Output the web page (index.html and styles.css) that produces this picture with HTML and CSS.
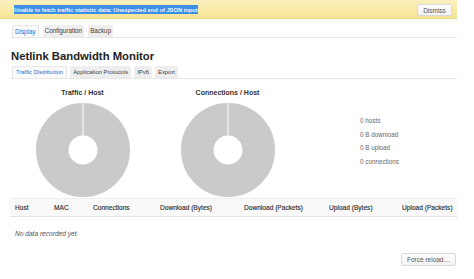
FILE: index.html
```html
<!DOCTYPE html>
<html>
<head>
<meta charset="utf-8">
<link rel="stylesheet" href="styles.css">
</head>
<body>
<div class="page">
  <div class="alert">
    <span class="alert-text"><span class="sel">Unable to fetch traffic statistic data: Unexpected end of JSON input</span></span>
    <button class="btn dismiss">Dismiss</button>
  </div>
  <ul class="tabs top">
    <li class="active">Display</li>
    <li>Configuration</li>
    <li>Backup</li>
  </ul>
  <h2 class="title">Netlink Bandwidth Monitor</h2>
  <ul class="tabs sub">
    <li class="active">Traffic Distribution</li>
    <li>Application Protocols</li>
    <li>IPv6</li>
    <li>Export</li>
  </ul>
  <div class="charts">
    <div class="chart">
      <div class="chart-title">Traffic / Host</div>
      <svg class="donut" width="96" height="96" viewBox="0 0 96 96">
        <circle cx="48" cy="48" r="30.75" fill="none" stroke="#cacaca" stroke-width="32.5"/>
        <line x1="48" y1="0" x2="48" y2="34" stroke="#ffffff" stroke-width="1"/>
      </svg>
    </div>
    <div class="chart">
      <div class="chart-title">Connections / Host</div>
      <svg class="donut" width="96" height="96" viewBox="0 0 96 96">
        <circle cx="48" cy="48" r="30.75" fill="none" stroke="#cacaca" stroke-width="32.5"/>
        <line x1="48" y1="0" x2="48" y2="34" stroke="#ffffff" stroke-width="1"/>
      </svg>
    </div>
    <div class="stats">
      <div>0 hosts</div>
      <div>0 B download</div>
      <div>0 B upload</div>
      <div>0 connections</div>
    </div>
  </div>
  <table class="hosts">
    <thead>
      <tr>
        <th class="c1">Host</th>
        <th class="c2">MAC</th>
        <th class="c3">Connections</th>
        <th class="c4">Download (Bytes)</th>
        <th class="c5">Download (Packets)</th>
        <th class="c6">Upload (Bytes)</th>
        <th class="c7">Upload (Packets)</th>
      </tr>
    </thead>
    <tbody>
      <tr><td colspan="7" class="empty">No data recorded yet.</td></tr>
    </tbody>
  </table>
  <div class="actions">
    <button class="btn reload">Force reload…</button>
  </div>
</div>
</body>
</html>
```
FILE: styles.css
```css
html, body {
  margin: 0;
  padding: 0;
  background: #ffffff;
}
body {
  font-family: "Liberation Sans", Arial, sans-serif;
  color: #404040;
  font-size: 7px;
}
.page {
  width: 447px;
  padding-left: 10px;
}
.alert {
  height: 19px;
  box-sizing: border-box;
  margin-left: -10px;
  padding: 0 5px 0 14px;
  display: flex;
  align-items: center;
  justify-content: space-between;
  background: linear-gradient(#fbf0be, #f6e594);
  border-bottom: 1px solid #e8d98c;
}
.alert-text {
  font-size: 5.75px;
  font-weight: bold;
}
.sel {
  background: #3d8ee6;
  color: #f3f7ff;
  padding: 1.5px 0;
}
.btn {
  font-family: "Liberation Sans", Arial, sans-serif;
  font-size: 6.5px;
  color: #555;
  background: linear-gradient(#ffffff, #f2f2f2);
  border: 1px solid #d8d8d8;
  border-radius: 2px;
  padding: 0;
  height: 13px;
}
.dismiss {
  width: 35px;
  height: 12px;
  margin-top: 2px;
}
.tabs {
  list-style: none;
  margin: 0;
  padding: 0 0 0 2px;
  display: flex;
  gap: 4px;
  border-bottom: 1px solid #e6e6e6;
  height: 12px;
}
.tabs li {
  background: #eeeeee;
  color: #404040;
  font-size: 6.3px;
  height: 12px;
  line-height: 12px;
  padding: 0 2px;
  border-radius: 2px 2px 0 0;
}
.tabs li.active {
  background: #fafafa;
  color: #1a6fd0;
  border: 1px solid #e6e6e6;
  border-bottom: none;
  height: 12px;
  line-height: 11px;
  box-sizing: border-box;
}
.tabs.sub li {
  font-size: 5.9px;
  padding: 0 3px;
}
.tabs.sub {
  gap: 3px;
}
.tabs.top {
  margin-top: 6px;
}
.title {
  margin: 9px 0 0 1px;
  font-size: 11.3px;
  font-weight: bold;
  color: #222;
  line-height: 18px;
  height: 18px;
}
.tabs.sub {
  margin-top: 1px;
}
.charts {
  display: grid;
  grid-template-columns: 145px 145px 1fr;
  margin-top: 9px;
}
.chart {
  display: flex;
  flex-direction: column;
  align-items: center;
}
.chart-title {
  font-size: 7px;
  font-weight: bold;
  color: #333;
  line-height: 9px;
}
.donut {
  margin-top: 5px;
  display: block;
}
.stats {
  padding: 29px 0 0 60px;
  color: #666;
  font-size: 6.3px;
  display: flex;
  flex-direction: column;
  gap: 5.5px;
  line-height: 8px;
}
.hosts {
  width: 447px;
  border-collapse: collapse;
  margin-top: 0;
  table-layout: fixed;
}
.hosts th {
  text-align: left;
  font-weight: normal;
  color: #333;
  font-size: 6.6px;
  background: #f9f9f9;
  height: 17px;
  padding: 0 0 0 5px;
  border-top: 1px solid #eeeeee;
  border-bottom: 1px solid #e2e2e2;
  -webkit-text-stroke: 0.15px #333;
}
.c1 { width: 34px; }
.c2 { width: 34px; }
.c3 { width: 62px; }
.c4 { width: 79px; }
.c5 { width: 80px; }
.c6 { width: 68px; }
.c7 { width: 55px; }
.hosts td.empty {
  font-style: italic;
  color: #555;
  font-size: 6.6px;
  padding: 12px 0 0 5px;
  height: 8px;
}
.actions {
  display: flex;
  justify-content: flex-end;
  margin-top: 16px;
  padding-right: 1px;
}
.reload {
  width: 55px;
}
```
